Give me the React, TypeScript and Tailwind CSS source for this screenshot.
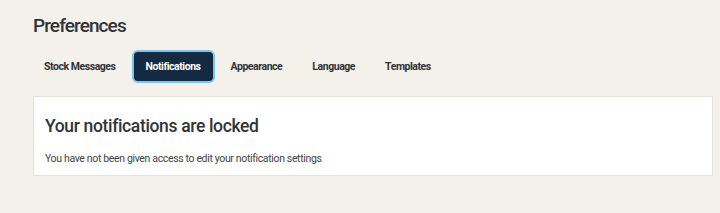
import React, { useState } from 'react';

const tabs = ['Stock Messages', 'Notifications', 'Appearance', 'Language', 'Templates'];

export default function App() {
  const [active, setActive] = useState('Notifications');

  return (
    <div
      className="min-h-[213px] w-full bg-[#f4f0ea] pl-[33px] pr-[7px] pt-[13px] pb-8 text-[#2f3338]"
      style={{ fontFamily: 'Roboto, "Noto Sans", sans-serif' }}
    >
      <h1 className="text-[19px] leading-[26px] font-medium tracking-[-0.9px]">Preferences</h1>

      <div className="-ml-px mt-[13px] flex items-center gap-[6px]">
        {tabs.map(t => (
          <button
            key={t}
            onClick={() => setActive(t)}
            className={`h-[29px] rounded-[4px] px-[12px] text-[10.5px] font-bold tracking-[-0.45px] ${
              active === t
                ? 'bg-[#142a40] text-white ring-2 ring-[#7dc3ef]'
                : 'text-[#2f3338]'
            }`}
          >
            {t}
          </button>
        ))}
      </div>

      <div className="mt-[15px] h-[80px] border border-[#e6e1da] bg-white px-[11px] pt-[18px]">
        <h2 className="text-[17.5px] leading-[22px] font-medium tracking-[-0.35px] text-[#2f3338]">
          Your notifications are locked
        </h2>
        <p className="mt-[15px] text-[10.5px] leading-[14px] text-[#3f4347] tracking-[-0.35px]">
          You have not been given access to edit your notification settings
        </p>
      </div>
    </div>
  );
}
